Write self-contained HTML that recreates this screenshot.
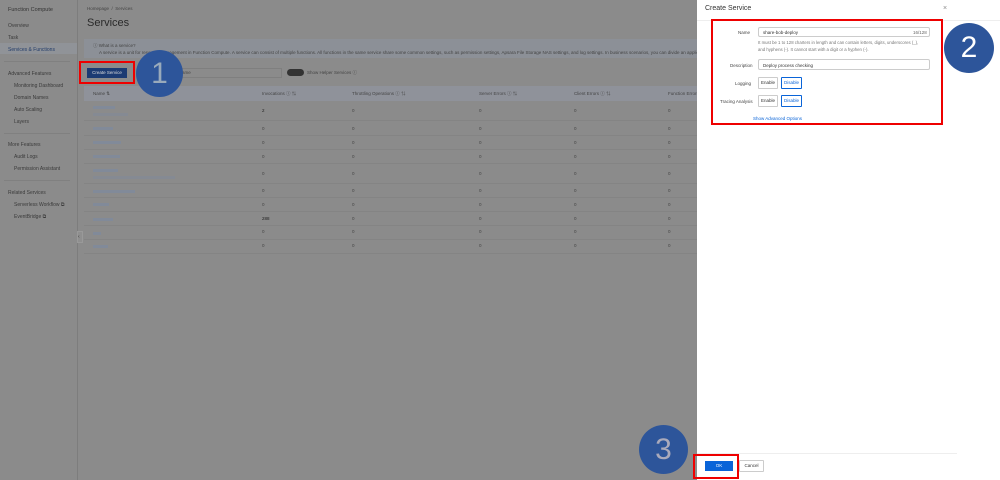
<!DOCTYPE html>
<html><head><style>
*{margin:0;padding:0;box-sizing:border-box}
body{width:1000px;height:480px;overflow:hidden;background:#8b8b8b;font-family:"Liberation Sans",sans-serif;position:relative;color:#333}
.a{position:absolute;white-space:nowrap}
.s{font-size:5px;color:#3a3a3a}
.t{font-size:4.5px;color:#444}
.blur{position:absolute;height:3px;background:#7e8aa0;opacity:.7}
.row{position:absolute;left:84px;width:613px;height:1px;background:#848484}
.circ{position:absolute;border-radius:50%;background:#2d559a;color:#fff;font-size:30px;text-align:center}
.box{position:absolute;border:2px solid #e00}
.in{position:absolute;border:1px solid #ccc;border-radius:2px;background:#fff}
.btn{position:absolute;border:1px solid #ccc;background:#fff;font-size:4.5px;text-align:center;border-radius:1px}
.col{position:absolute;top:0;font-size:4.5px;color:#444}
.col div{position:absolute;left:0}
</style></head><body>
<div class="a" style="left:77px;top:0;width:1px;height:480px;background:#7d7d7d"></div>
<div class="a" style="left:0;top:43px;width:77px;height:11px;background:#909398"></div>
<div class="a" style="left:4px;top:61px;width:66px;height:1px;background:#808080"></div>
<div class="a" style="left:4px;top:133px;width:66px;height:1px;background:#808080"></div>
<div class="a" style="left:4px;top:180px;width:66px;height:1px;background:#808080"></div>
<div class="a" style="left:8px;top:7px;font-size:5.5px;color:#333">Function Compute</div>
<div class="a s" style="left:8px;top:23px">Overview</div>
<div class="a s" style="left:8px;top:35px">Task</div>
<div class="a s" style="left:8px;top:47px;color:#233d6a">Services &amp; Functions</div>
<div class="a s" style="left:8px;top:71px">Advanced Features</div>
<div class="a s" style="left:14px;top:83px">Monitoring Dashboard</div>
<div class="a s" style="left:14px;top:95px">Domain Names</div>
<div class="a s" style="left:14px;top:107px">Auto Scaling</div>
<div class="a s" style="left:14px;top:119px">Layers</div>
<div class="a s" style="left:8px;top:142px">More Features</div>
<div class="a s" style="left:14px;top:154px">Audit Logs</div>
<div class="a s" style="left:14px;top:166px">Permission Assistant</div>
<div class="a s" style="left:8px;top:190px">Related Services</div>
<div class="a s" style="left:14px;top:202px">Serverless Workflow ⧉</div>
<div class="a s" style="left:14px;top:214px">EventBridge ⧉</div>
<div class="a" style="left:77px;top:231px;width:6px;height:12px;border:1px solid #999;background:#8f8f8f;font-size:5px;line-height:10px">‹</div>

<div class="a t" style="left:87px;top:6px">Homepage &nbsp;/ &nbsp;Services</div>
<div class="a" style="left:87px;top:17px;font-size:11px;color:#2a2a2a">Services</div>
<div class="a" style="left:84px;top:39px;width:613px;height:19px;background:#8c9097"></div>
<div class="a t" style="left:93px;top:43px">ⓘ What is a service?</div>
<div class="a t" style="left:99px;top:50px">A service is a unit for resource management in Function Compute. A service can consist of multiple functions. All functions in the same service share some common settings, such as permission settings, Apsara File Storage NAS settings, and log settings. In business scenarios, you can divide an applicatio</div>
<div class="a" style="left:87px;top:68px;width:40px;height:10px;background:#1c3b73;color:#ddd;font-size:4.5px;text-align:center;line-height:10px">Create Service</div>
<div class="a" style="left:160px;top:68px;width:122px;height:10px;border:1px solid #7f7f7f"></div>
<div class="a t" style="left:182px;top:70px">ame</div>
<div class="a" style="left:287px;top:69px;width:17px;height:7px;border-radius:4px;background:#333"></div>
<div class="a t" style="left:307px;top:70px">Show Helper Services ⓘ</div>
<div class="a" style="left:84px;top:86px;width:613px;height:15px;background:#8f929a"></div>
<div class="a t" style="left:93px;top:91px">Name ⇅</div>
<div class="a t" style="left:262px;top:91px">Invocations ⓘ ⇅</div>
<div class="a t" style="left:352px;top:91px">Throttling Operations ⓘ ⇅</div>
<div class="a t" style="left:479px;top:91px">Server Errors ⓘ ⇅</div>
<div class="a t" style="left:574px;top:91px">Client Errors ⓘ ⇅</div>
<div class="a t" style="left:668px;top:91px">Function Errors</div>
<div class="row" style="top:120px"></div><div class="row" style="top:135px"></div><div class="row" style="top:149px"></div><div class="row" style="top:163px"></div><div class="row" style="top:183px"></div><div class="row" style="top:197px"></div><div class="row" style="top:211px"></div><div class="row" style="top:225px"></div><div class="row" style="top:239px"></div><div class="row" style="top:253px"></div>

<div class="col" style="left:262px"><div style="top:108px;color:#222">2</div><div style="top:126px">0</div><div style="top:140px">0</div><div style="top:154px">0</div><div style="top:171px">0</div><div style="top:188px">0</div><div style="top:202px">0</div><div style="top:216px;color:#222">288</div><div style="top:229px">0</div><div style="top:243px">0</div></div>
<div class="col" style="left:352px"><div style="top:108px">0</div><div style="top:126px">0</div><div style="top:140px">0</div><div style="top:154px">0</div><div style="top:171px">0</div><div style="top:188px">0</div><div style="top:202px">0</div><div style="top:216px">0</div><div style="top:229px">0</div><div style="top:243px">0</div></div>
<div class="col" style="left:479px"><div style="top:108px">0</div><div style="top:126px">0</div><div style="top:140px">0</div><div style="top:154px">0</div><div style="top:171px">0</div><div style="top:188px">0</div><div style="top:202px">0</div><div style="top:216px">0</div><div style="top:229px">0</div><div style="top:243px">0</div></div>
<div class="col" style="left:574px"><div style="top:108px">0</div><div style="top:126px">0</div><div style="top:140px">0</div><div style="top:154px">0</div><div style="top:171px">0</div><div style="top:188px">0</div><div style="top:202px">0</div><div style="top:216px">0</div><div style="top:229px">0</div><div style="top:243px">0</div></div>
<div class="col" style="left:668px"><div style="top:108px">0</div><div style="top:126px">0</div><div style="top:140px">0</div><div style="top:154px">0</div><div style="top:171px">0</div><div style="top:188px">0</div><div style="top:202px">0</div><div style="top:216px">0</div><div style="top:229px">0</div><div style="top:243px">0</div></div>

<div class="blur" style="left:93px;top:106px;width:22px"></div><div class="blur" style="left:93px;top:113px;width:35px;opacity:.4"></div>
<div class="blur" style="left:93px;top:127px;width:20px"></div><div class="blur" style="left:93px;top:141px;width:28px"></div><div class="blur" style="left:93px;top:155px;width:27px"></div><div class="blur" style="left:93px;top:169px;width:25px"></div><div class="blur" style="left:93px;top:176px;width:82px;opacity:.4"></div><div class="blur" style="left:93px;top:190px;width:42px"></div><div class="blur" style="left:93px;top:203px;width:16px"></div><div class="blur" style="left:93px;top:218px;width:20px"></div><div class="blur" style="left:93px;top:232px;width:8px"></div><div class="blur" style="left:93px;top:245px;width:15px"></div>

<div class="box" style="left:79px;top:61px;width:56px;height:23px"></div>
<div class="circ" style="left:136px;top:50px;width:47px;height:47px;line-height:47px;color:#9ab">1</div>

<div class="a" style="left:697px;top:0;width:303px;height:480px;background:#fff"></div>
<div class="a" style="left:705px;top:5px;font-size:7px;color:#333">Create Service</div>
<div class="a" style="left:943px;top:5px;font-size:7px;color:#888">×</div>
<div class="a" style="left:697px;top:20px;width:303px;height:1px;background:#eee"></div>
<div class="a t" style="left:738px;top:30px">Name</div>
<div class="in" style="left:758px;top:27px;width:172px;height:10px"></div>
<div class="a t" style="left:763px;top:30px;color:#333">share-bob-deploy</div>
<div class="a t" style="left:913px;top:30px;color:#666">16/128</div>
<div class="a" style="left:758px;top:40px;font-size:4.3px;color:#777;line-height:6.5px">It must be 1 to 128 charters in length and can contain letters, digits, underscores (_),<br>and hyphens (-). It cannot start with a digit or a hyphen (-).</div>
<div class="a t" style="left:730px;top:63px">Description</div>
<div class="in" style="left:758px;top:59px;width:172px;height:11px"></div>
<div class="a t" style="left:763px;top:63px;color:#333">Deploy process checking</div>
<div class="a t" style="left:735px;top:81px">Logging</div>
<div class="btn" style="left:758px;top:77px;width:20px;height:12px;line-height:10px">Enable</div>
<div class="btn" style="left:781px;top:77px;width:21px;height:12px;line-height:10px;border-color:#0a64d8;color:#0a64d8">Disable</div>
<div class="a t" style="left:720px;top:99px">Tracing Analysis</div>
<div class="btn" style="left:758px;top:95px;width:20px;height:12px;line-height:10px">Enable</div>
<div class="btn" style="left:781px;top:95px;width:21px;height:12px;line-height:10px;border-color:#0a64d8;color:#0a64d8">Disable</div>
<div class="a t" style="left:753px;top:116px;color:#0a64d8">Show Advanced Options</div>
<div class="box" style="left:711px;top:19px;width:232px;height:106px"></div>
<div class="circ" style="left:944px;top:23px;width:50px;height:50px;line-height:50px">2</div>

<div class="a" style="left:697px;top:453px;width:260px;height:1px;background:#eee"></div>
<div class="a" style="left:705px;top:461px;width:28px;height:10px;background:#0a64d8;color:#fff;font-size:4.5px;text-align:center;line-height:10px">OK</div>
<div class="btn" style="left:739px;top:460px;width:25px;height:12px;line-height:10px">Cancel</div>
<div class="a" style="left:630px;top:420px;width:67px;height:54px;background:#8b8b8b"></div>
<div class="box" style="left:693px;top:454px;width:46px;height:25px"></div>
<div class="circ" style="left:639px;top:425px;width:49px;height:49px;line-height:49px;color:#aab">3</div>
</body></html>
